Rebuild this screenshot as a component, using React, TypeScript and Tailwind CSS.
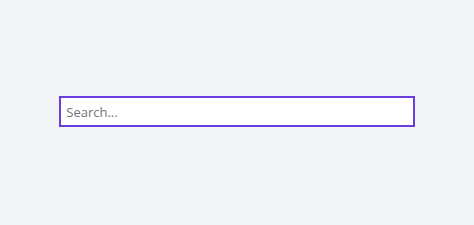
export default function App() {
  return (
    <div className="flex h-screen w-full items-center justify-center bg-[#f3f4f6] pb-[2px]">
      <input
        type="text"
        placeholder="Search..."
        className="h-[31px] w-3/4 border-2 border-[#6a3ddc] bg-white px-[5px] text-[13px] text-gray-700 outline-none placeholder:text-[#74747c]"
        style={{ fontFamily: '"Open Sans", "Liberation Sans", sans-serif' }}
      />
    </div>
  );
}
